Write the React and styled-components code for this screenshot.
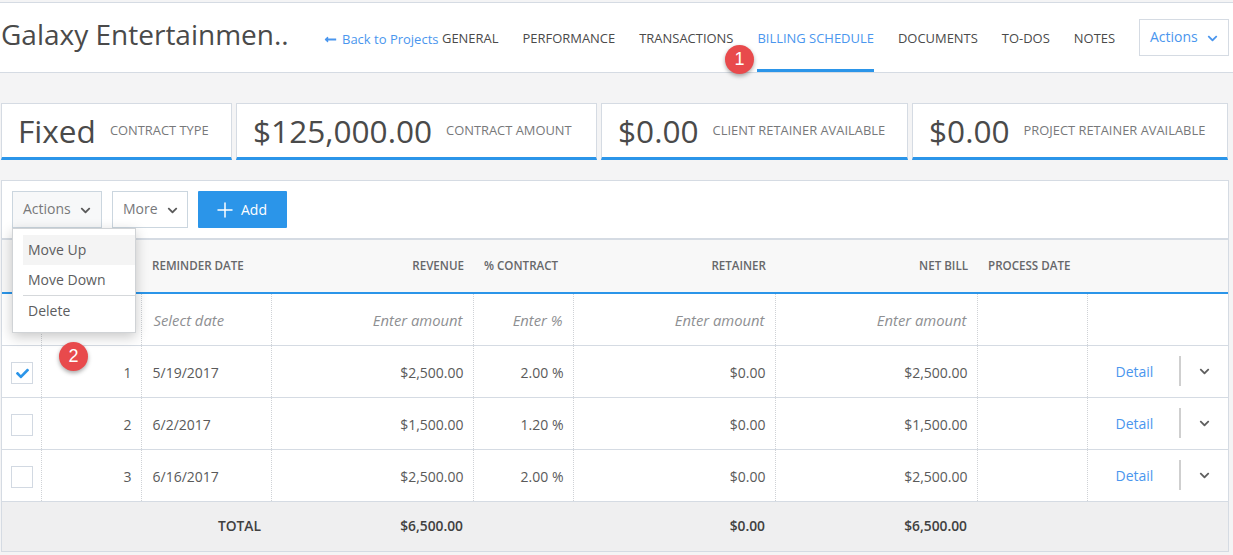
import React from 'react'
import styled, { createGlobalStyle } from 'styled-components'
import { Plus } from 'lucide-react'
import { FaCheck, FaChevronDown, FaLongArrowAltLeft } from 'react-icons/fa'

const GlobalStyle = createGlobalStyle`
  html, body {
    margin: 0;
    padding: 0;
    background: #f4f4f5;
  }
  body {
    font-family: "Open Sans", "Liberation Sans", sans-serif;
    color: #4a4a4a;
    width: 1233px;
    height: 555px;
    overflow: hidden;
  }
`

const Page = styled.div`
  position: relative;
  width: 1233px;
  height: 555px;
  padding-top: 2px;
  box-sizing: border-box;
`

const Header = styled.header`
  height: 71px;
  box-sizing: border-box;
  background: #fff;
  border-top: 1px solid #d5dbe3;
  border-bottom: 1px solid #d5dbe3;
  display: flex;
  align-items: stretch;
  padding: 0 4px 0 1px;
`

const Title = styled.h1`
  margin: 12px 0 0;
  width: 323px;
  font-size: 28px;
  line-height: 38px;
  font-weight: 400;
  color: #4a4a4a;
  white-space: nowrap;
`

const BackLink = styled.a`
  display: flex;
  align-items: center;
  gap: 5px;
  height: 18px;
  margin-top: 27px;
  width: 118px;
  font-size: 13px;
  color: #4a96ee;
  white-space: nowrap;
`

const Nav = styled.nav`
  display: flex;
  gap: 24px;
  flex: 1;
`

const NavItem = styled.a`
  display: block;
  height: 69px;
  box-sizing: border-box;
  padding-top: 26px;
  font-size: 12.96px;
  line-height: 18px;
  white-space: nowrap;
  color: ${({ $active }) => ($active ? '#4a96ee' : '#4a4a4a')};
  border-bottom: 3px solid ${({ $active }) => ($active ? '#2b95e9' : 'transparent')};
`

const HeaderActions = styled.button`
  display: flex;
  align-items: center;
  gap: 9px;
  width: 90px;
  height: 37px;
  margin-top: 16px;
  padding: 0 0 2px 10px;
  box-sizing: border-box;
  background: #fff;
  border: 1px solid #d5dbe3;
  font: 400 14px "Open Sans", sans-serif;
  color: #4a96ee;

  svg {
    margin-top: 3px;
  }
`

const Stats = styled.section`
  display: flex;
  gap: 4px;
  margin: 30px 5px 0 1px;
`

const Stat = styled.div`
  display: flex;
  align-items: center;
  gap: 14px;
  width: ${({ $width }) => $width}px;
  height: 57px;
  box-sizing: border-box;
  background: #fff;
  border: 1px solid #d5dbe3;
  border-bottom: 3px solid #2b95e9;
  padding: 0 0 0 16px;
  white-space: nowrap;
`

const StatValue = styled.span`
  font-size: 31.6px;
  line-height: 40px;
  color: #4a4a4a;
`

const StatLabel = styled.span`
  margin-bottom: 2px;
  font-size: 12.9px;
  color: #77787a;
`

const Panel = styled.section`
  margin: 20px 4px 0 1px;
  height: 372px;
  box-sizing: border-box;
  background: #fff;
  border: 1px solid #d5dbe3;
`

const Toolbar = styled.div`
  display: flex;
  gap: 10px;
  height: 57px;
  box-sizing: border-box;
  padding: 10px 0 0 10px;
`

const ToolWrap = styled.div`
  position: relative;
`

const ToolButton = styled.button`
  display: flex;
  align-items: center;
  gap: 9px;
  height: 37px;
  width: ${({ $width }) => $width}px;
  padding: 0 0 2px 10px;
  box-sizing: border-box;
  background: ${({ $open }) => ($open ? '#f7f8f9' : '#fff')};
  border: 1px solid #cbd6df;
  font: 400 14px "Open Sans", sans-serif;
  color: #77787a;

  svg {
    margin-top: 3px;
    color: #5a5a5a;
  }
`

const AddButton = styled.button`
  display: flex;
  align-items: center;
  gap: 4px;
  width: 89px;
  height: 37px;
  padding: 0 0 0 15px;
  box-sizing: border-box;
  background: #2b95e9;
  border: 0;
  border-radius: 1px;
  font: 400 14px "Open Sans", sans-serif;
  color: #fff;
`

const Menu = styled.div`
  position: absolute;
  z-index: 2;
  top: 37px;
  left: 0;
  width: 124px;
  height: 105px;
  box-sizing: border-box;
  padding-top: 6px;
  background: #fff;
  border: 1px solid #d0d3d6;
  box-shadow: 0 4px 12px rgba(0, 0, 0, 0.22);
`

const MenuItem = styled.div`
  margin-left: 10px;
  padding-left: 5px;
  height: 30px;
  line-height: 29px;
  font-size: 14px;
  color: #5c5d60;
  background: ${({ $hover }) => ($hover ? '#f4f4f4' : 'transparent')};
  border-top: ${({ $divided }) => ($divided ? '1px solid #d5d8db' : '0')};
`

const Table = styled.table`
  width: 1226px;
  table-layout: fixed;
  border-collapse: collapse;
  font-size: 14px;
`

const HeadRow = styled.tr`
  height: 54px;
  background: #f8f8f8;
  border-top: 2px solid #d5dbe3;
  border-bottom: 2px solid #2b95e9;
`

const HeadCell = styled.th`
  padding: 0 9px 1px 11px;
  font-size: 11.6px;
  font-weight: 600;
  color: #66676a;
  white-space: nowrap;
  text-align: ${({ $right }) => ($right ? 'right' : 'left')};
`

const Row = styled.tr`
  height: 52px;
  border-bottom: 1px solid #d5dbe3;
`

const Cell = styled.td`
  padding: 2px 9px 0 11px;
  white-space: nowrap;
  color: #5a5a5a;
  text-align: ${({ $right }) => ($right ? 'right' : 'left')};
  border-right: 1px dotted #cfd2d6;
`

const InputCell = styled(Cell)`
  padding: 2px 10px 0 12px;
  font-size: 14.8px;
  font-style: italic;
  color: #8e8f92;
`

const CheckCell = styled(Cell)`
  padding: 4px 9px 0 10px;
`

const ActionCell = styled.td`
  padding: 0 10px;
`

const TotalRow = styled.tr`
  height: 50px;
  background: #efeff0;
`

const TotalCell = styled.td`
  padding: 0 10px 2px;
  font-weight: 600;
  font-size: 13.8px;
  color: #404040;
  text-align: right;
`

const Checkbox = styled.span`
  display: flex;
  align-items: center;
  justify-content: center;
  width: 22px;
  height: 22px;
  margin-left: -1px;
  box-sizing: border-box;
  border: 1px solid #d2d9e2;
  color: #2b95e9;
`

const RowActions = styled.div`
  display: flex;
  align-items: center;
  height: 30px;
`

const DetailLink = styled.a`
  width: 63px;
  margin-left: 18px;
  font-size: 14px;
  color: #4a96ee;
`

const RowMenu = styled.span`
  display: flex;
  align-items: center;
  height: 30px;
  padding-left: 18px;
  border-left: 2px solid #cfcfcf;
  color: #5f5f5f;
`

const Badge = styled.span`
  position: absolute;
  z-index: 3;
  left: ${({ $x }) => $x}px;
  top: ${({ $y }) => $y}px;
  width: 29px;
  height: 29px;
  border-radius: 50%;
  background: #e84a4c;
  color: #fff;
  font: 400 18px/29px "Liberation Sans", sans-serif;
  text-align: center;
  box-shadow: 0 2px 4px rgba(0, 0, 0, 0.35);
`

const navItems = ['GENERAL', 'PERFORMANCE', 'TRANSACTIONS', 'BILLING SCHEDULE', 'DOCUMENTS', 'TO-DOS', 'NOTES']

const stats = [
  { value: 'Fixed', label: 'CONTRACT TYPE', width: 231 },
  { value: '$125,000.00', label: 'CONTRACT AMOUNT', width: 361 },
  { value: '$0.00', label: 'CLIENT RETAINER AVAILABLE', width: 307 },
  { value: '$0.00', label: 'PROJECT RETAINER AVAILABLE', width: 316 },
]

const columnWidths = [39, 100, 130, 202, 100, 202, 202, 110, 141]

const rows = [
  { id: 1, date: '5/19/2017', revenue: '$2,500.00', percent: '2.00 %', net: '$2,500.00', checked: true },
  { id: 2, date: '6/2/2017', revenue: '$1,500.00', percent: '1.20 %', net: '$1,500.00' },
  { id: 3, date: '6/16/2017', revenue: '$2,500.00', percent: '2.00 %', net: '$2,500.00' },
]

export default function App() {
  return (
    <Page>
      <GlobalStyle />
      <Header>
        <Title>Galaxy Entertainmen..</Title>
        <BackLink>
          <FaLongArrowAltLeft size={13} />
          Back to Projects
        </BackLink>
        <Nav>
          {navItems.map((item) => (
            <NavItem key={item} $active={item === 'BILLING SCHEDULE'}>
              {item}
            </NavItem>
          ))}
        </Nav>
        <HeaderActions>
          Actions
          <FaChevronDown size={11} />
        </HeaderActions>
      </Header>

      <Stats>
        {stats.map((stat) => (
          <Stat key={stat.label} $width={stat.width}>
            <StatValue>{stat.value}</StatValue>
            <StatLabel>{stat.label}</StatLabel>
          </Stat>
        ))}
      </Stats>

      <Panel>
        <Toolbar>
          <ToolWrap>
            <ToolButton $width={90} $open>
              Actions
              <FaChevronDown size={11} />
            </ToolButton>
            <Menu>
              <MenuItem $hover>Move Up</MenuItem>
              <MenuItem>Move Down</MenuItem>
              <MenuItem $divided>Delete</MenuItem>
            </Menu>
          </ToolWrap>
          <ToolButton $width={76}>
            More
            <FaChevronDown size={11} />
          </ToolButton>
          <AddButton>
            <Plus size={24} strokeWidth={1.5} />
            Add
          </AddButton>
        </Toolbar>
        <Table>
          <colgroup>
            {columnWidths.map((width, i) => (
              <col key={i} style={{ width }} />
            ))}
          </colgroup>
          <thead>
            <HeadRow>
              <HeadCell />
              <HeadCell />
              <HeadCell>REMINDER DATE</HeadCell>
              <HeadCell $right>REVENUE</HeadCell>
              <HeadCell>% CONTRACT</HeadCell>
              <HeadCell $right>RETAINER</HeadCell>
              <HeadCell $right>NET BILL</HeadCell>
              <HeadCell>PROCESS DATE</HeadCell>
              <HeadCell />
            </HeadRow>
          </thead>
          <tbody>
            <Row>
              <Cell />
              <Cell />
              <InputCell>Select date</InputCell>
              <InputCell $right>Enter amount</InputCell>
              <InputCell $right>Enter %</InputCell>
              <InputCell $right>Enter amount</InputCell>
              <InputCell $right>Enter amount</InputCell>
              <Cell />
              <ActionCell />
            </Row>
            {rows.map((row) => (
              <Row key={row.id}>
                <CheckCell>
                  <Checkbox>{row.checked && <FaCheck size={13} />}</Checkbox>
                </CheckCell>
                <Cell $right>{row.id}</Cell>
                <Cell>{row.date}</Cell>
                <Cell $right>{row.revenue}</Cell>
                <Cell $right>{row.percent}</Cell>
                <Cell $right>$0.00</Cell>
                <Cell $right>{row.net}</Cell>
                <Cell />
                <ActionCell>
                  <RowActions>
                    <DetailLink>Detail</DetailLink>
                    <RowMenu>
                      <FaChevronDown size={11} />
                    </RowMenu>
                  </RowActions>
                </ActionCell>
              </Row>
            ))}
            <TotalRow>
              <TotalCell colSpan={3}>TOTAL</TotalCell>
              <TotalCell>$6,500.00</TotalCell>
              <TotalCell />
              <TotalCell>$0.00</TotalCell>
              <TotalCell>$6,500.00</TotalCell>
              <TotalCell colSpan={2} />
            </TotalRow>
          </tbody>
        </Table>
      </Panel>

      <Badge $x={725} $y={45}>1</Badge>
      <Badge $x={59} $y={342}>2</Badge>
    </Page>
  )
}
